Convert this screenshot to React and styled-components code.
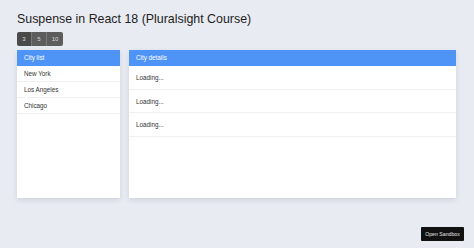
import React, { useState } from 'react';
import styled, { createGlobalStyle } from 'styled-components';

const GlobalStyle = createGlobalStyle`
  html, body {
    margin: 0;
    padding: 0;
    background: #e9ebf2;
    font-family: "Liberation Sans", Arial, sans-serif;
  }
`;

const Page = styled.div`
  box-sizing: border-box;
  width: 474px;
  height: 248px;
  padding: 12px 18px 0 17px;
  position: relative;
`;

const Title = styled.h1`
  margin: 0;
  font-size: 12.4px;
  line-height: 15px;
  font-weight: 400;
  color: #222;
`;

const ButtonGroup = styled.div`
  display: inline-flex;
  margin-top: 4px;
  border-radius: 2px;
  overflow: hidden;
`;

const CountButton = styled.button`
  box-sizing: border-box;
  width: ${(p) => p.$w}px;
  height: 14px;
  padding: 0;
  border: 0;
  border-left: ${(p) => (p.$first ? '0' : '1px solid #7a7a7a')};
  background: ${(p) => (p.$active ? '#4a4a4a' : '#5d5d5d')};
  color: #d8d8d8;
  font-family: "Liberation Sans", Arial, sans-serif;
  font-size: 6px;
  cursor: pointer;
`;

const Columns = styled.div`
  display: flex;
  gap: 9px;
  margin-top: 4px;
`;

const Panel = styled.section`
  width: ${(p) => p.$w}px;
  height: 148px;
  background: #fff;
  box-shadow: 0 2px 5px rgba(60, 70, 100, 0.15);
  display: flex;
  flex-direction: column;
`;

const PanelHeader = styled.div`
  height: 16px;
  background: #4e94f7;
  color: #fff;
  font-size: 6.3px;
  line-height: 16px;
  padding-left: 7px;
  flex-shrink: 0;
`;

const Row = styled.div`
  height: ${(p) => p.$h}px;
  line-height: ${(p) => p.$h}px;
  padding-left: 7px;
  font-size: 6.3px;
  color: #333;
  border-bottom: 1px solid #f0f0f0;
  box-sizing: border-box;
`;

const SandboxButton = styled.button`
  position: absolute;
  right: 10px;
  bottom: 7px;
  width: 43px;
  height: 14px;
  padding: 0;
  border: 0;
  border-radius: 1px;
  background: #111;
  color: #e6e6e6;
  font-family: "Liberation Sans", Arial, sans-serif;
  font-size: 5.2px;
`;

const cities = ['New York', 'Los Angeles', 'Chicago'];
const counts = [
  { n: 3, w: 14 },
  { n: 5, w: 15 },
  { n: 10, w: 17 },
];

export default function App() {
  const [count, setCount] = useState(3);
  return (
    <Page>
      <GlobalStyle />
      <Title>Suspense in React 18 (Pluralsight Course)</Title>
      <ButtonGroup>
        {counts.map((c, i) => (
          <CountButton
            key={c.n}
            $w={c.w}
            $first={i === 0}
            $active={count === c.n}
            onClick={() => setCount(c.n)}
          >
            {c.n}
          </CountButton>
        ))}
      </ButtonGroup>
      <Columns>
        <Panel $w={103}>
          <PanelHeader>City list</PanelHeader>
          {cities.map((c) => (
            <Row key={c} $h={16}>{c}</Row>
          ))}
        </Panel>
        <Panel $w={327}>
          <PanelHeader>City details</PanelHeader>
          {cities.map((c) => (
            <Row key={c} $h={23.7}>Loading...</Row>
          ))}
        </Panel>
      </Columns>
      <SandboxButton>Open Sandbox</SandboxButton>
    </Page>
  );
}
